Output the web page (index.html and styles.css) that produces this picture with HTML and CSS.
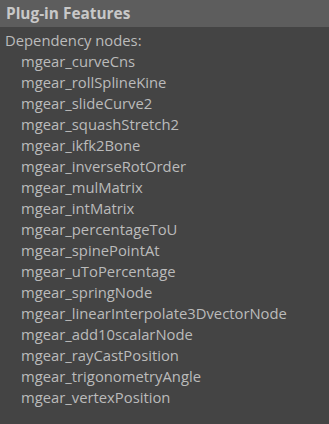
FILE: index.html
```html
<!DOCTYPE html>
<html>
<head>
<meta charset="utf-8">
<link rel="stylesheet" href="styles.css">
</head>
<body>
<div class="panel">
  <div class="header">Plug-in Features</div>
  <div class="content">
    <div class="label">Dependency nodes:</div>
    <ul class="list">
      <li>mgear_curveCns</li>
      <li>mgear_rollSplineKine</li>
      <li>mgear_slideCurve2</li>
      <li>mgear_squashStretch2</li>
      <li>mgear_ikfk2Bone</li>
      <li>mgear_inverseRotOrder</li>
      <li>mgear_mulMatrix</li>
      <li>mgear_intMatrix</li>
      <li>mgear_percentageToU</li>
      <li>mgear_spinePointAt</li>
      <li>mgear_uToPercentage</li>
      <li>mgear_springNode</li>
      <li>mgear_linearInterpolate3DvectorNode</li>
      <li>mgear_add10scalarNode</li>
      <li>mgear_rayCastPosition</li>
      <li>mgear_trigonometryAngle</li>
      <li>mgear_vertexPosition</li>
    </ul>
  </div>
</div>
</body>
</html>
```
FILE: styles.css
```css
html, body {
  margin: 0;
  padding: 0;
  background: #444444;
}
.panel {
  width: 329px;
  height: 424px;
  background: #444444;
  font-family: "Open Sans", "Noto Sans", sans-serif;
  color: #bbbbbb;
}
.header {
  height: 27px;
  background: #5d5d5d;
  color: #c8c8c8;
  font-weight: bold;
  font-size: 15.4px;
  line-height: 28px;
  padding-left: 6px;
  box-sizing: border-box;
}
.content {
  padding: 3px 0 0 5px;
  font-size: 14.8px;
}
.label {
  line-height: 21px;
}
.list {
  list-style: none;
  margin: 0;
  padding: 0 0 0 16px;
}
.list li {
  line-height: 21px;
}
```
